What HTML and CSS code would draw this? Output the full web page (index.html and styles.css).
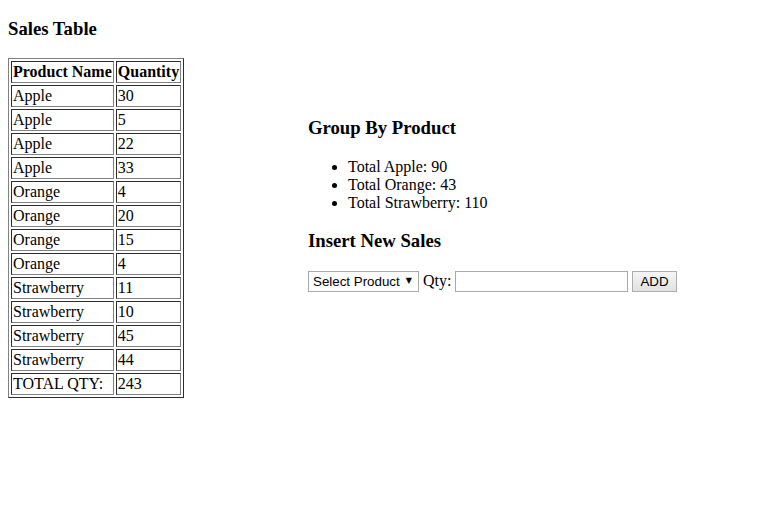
FILE: index.html
```html
<!DOCTYPE html>
<html lang="en">

<head>
    <meta charset="UTF-8">
    <title>Sales</title>
    <link rel="stylesheet" href="styles.css">
</head>

<body>
    <div class="app">
        <div class="sales-panel">
            <h3>Sales Table</h3>
            <table class="sales-table">
                <thead>
                    <tr><th>Product Name</th><th>Quantity</th></tr>
                </thead>
                <tbody>
                    <tr><td>Apple</td><td>30</td></tr>
                    <tr><td>Apple</td><td>5</td></tr>
                    <tr><td>Apple</td><td>22</td></tr>
                    <tr><td>Apple</td><td>33</td></tr>
                    <tr><td>Orange</td><td>4</td></tr>
                    <tr><td>Orange</td><td>20</td></tr>
                    <tr><td>Orange</td><td>15</td></tr>
                    <tr><td>Orange</td><td>4</td></tr>
                    <tr><td>Strawberry</td><td>11</td></tr>
                    <tr><td>Strawberry</td><td>10</td></tr>
                    <tr><td>Strawberry</td><td>45</td></tr>
                    <tr><td>Strawberry</td><td>44</td></tr>
                    <tr><td>TOTAL QTY:</td><td>243</td></tr>
                </tbody>
            </table>
        </div>

        <div class="side-panel">
            <h3>Group By Product</h3>
            <ul class="totals">
                <li>Total Apple: 90</li>
                <li>Total Orange: 43</li>
                <li>Total Strawberry: 110</li>
            </ul>

            <h3>Insert New Sales</h3>
            <form class="insert-form">
                <span class="select-wrap">
                    <select class="product-select">
                        <option>Select Product</option>
                        <option>Apple</option>
                        <option>Orange</option>
                        <option>Strawberry</option>
                    </select>
                </span>
                Qty:
                <input type="text" class="qty-input">
                <button type="button" class="add-btn">ADD</button>
            </form>
        </div>
    </div>
</body>

</html>
```

FILE: styles.css
```css
body {
    margin: 0 8px;
    font-family: "Liberation Serif", "Times New Roman", serif;
    font-size: 16px;
    color: #000;
    background: #fff;
}

.app {
    display: flex;
    align-items: center;
}

.sales-panel {
    width: 300px;
}

.sales-panel h3 {
    margin: 18px 0;
}

.side-panel {
    margin-top: -8px;
}

h3 {
    font-size: 18.72px;
    font-weight: bold;
    margin: 18.72px 0;
}

.sales-table {
    border: 1px outset #808080;
    border-spacing: 2px;
}

.sales-table th,
.sales-table td {
    border: 1px inset #808080;
    padding: 1px;
    text-align: left;
}

.totals {
    margin: 16px 0;
    padding-left: 40px;
}

.insert-form {
    display: flex;
    align-items: center;
    gap: 4px;
}

.select-wrap {
    position: relative;
    display: inline-block;
}

.select-wrap::after {
    content: "\25BC";
    position: absolute;
    right: 7px;
    top: 5px;
    font-family: "DejaVu Sans", sans-serif;
    font-size: 8px;
    line-height: 10px;
    color: #000;
    pointer-events: none;
}

.product-select {
    appearance: none;
    -webkit-appearance: none;
    display: block;
    width: 111px;
    height: 21px;
    font-family: "Liberation Sans", Arial, sans-serif;
    font-size: 13.33px;
    border: 1px solid #a9a9a9;
    border-radius: 0;
    background: #fff;
    color: #000;
    padding: 0 0 0 4px;
}

.qty-input {
    width: 169px;
    height: 17px;
    padding: 1px 1px;
    border: 1px solid #a9a9a9;
    font-size: 13.33px;
}

.add-btn {
    font-family: "Liberation Sans", Arial, sans-serif;
    font-size: 13.33px;
    height: 21px;
    padding: 1px 7px;
    border: 1px solid #adadad;
    border-radius: 0;
    background: linear-gradient(#f5f5f5, #e1e1e1);
    color: #000;
}
```
